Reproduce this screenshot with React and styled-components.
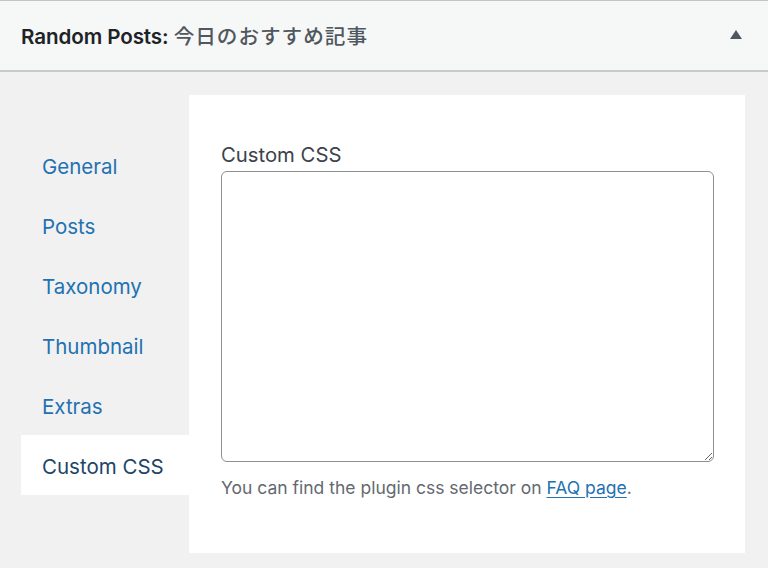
import React from 'react';
import styled, { createGlobalStyle } from 'styled-components';

const GlobalStyle = createGlobalStyle`
  html, body {
    margin: 0;
    padding: 0;
    background: #f1f1f1;
    font-family: Inter, "Noto Sans", "Noto Sans CJK JP", sans-serif;
  }
`;

const Page = styled.div`
  width: 768px;
  height: 568px;
  overflow: hidden;
  background: #f1f1f1;
`;

const Header = styled.div`
  height: 69px;
  box-sizing: content-box;
  border-top: 1px solid #c3c4c7;
  border-bottom: 2px solid #c8c9cc;
  background: #f6f7f7;
  display: flex;
  align-items: center;
  justify-content: space-between;
  padding: 0 26px 0 21px;
`;

const Title = styled.h2`
  margin: 0 0 2px;
  font-size: 20.6px;
  font-weight: 600;
  color: #1d2327;
  letter-spacing: -0.1px;

  span {
    font-family: "Noto Sans CJK JP", sans-serif;
    font-size: 20.6px;
    font-weight: 500;
    color: #50575e;
    letter-spacing: 1px;
  }
`;

const Toggle = styled.div`
  width: 0;
  height: 0;
  border-left: 6px solid transparent;
  border-right: 6px solid transparent;
  border-bottom: 9px solid #50575e;
  margin-top: -2px;
`;

const Body = styled.div`
  display: flex;
  padding: 23px 23px 0 21px;
`;

const Nav = styled.ul`
  list-style: none;
  margin: 0;
  padding: 40px 0 0;
  width: 168px;
  flex-shrink: 0;
`;

const NavItem = styled.li`
  height: 60px;
  display: flex;
  align-items: center;
  padding-left: 21px;
  padding-top: 3px;
  box-sizing: border-box;
  font-size: 20.5px;
  color: ${p => (p.$active ? '#1d4567' : '#2271b1')};
  background: ${p => (p.$active ? '#fff' : 'transparent')};
`;

const Panel = styled.div`
  flex: 1;
  height: 458px;
  background: #fff;
  padding: 48px 31px 0 32px;
  box-sizing: border-box;
`;

const Label = styled.div`
  font-size: 20.3px;
  color: #3c434a;
  line-height: 24px;
  margin-bottom: 4px;
`;

const TextArea = styled.textarea`
  display: block;
  width: 100%;
  height: 291px;
  box-sizing: border-box;
  border: 1.5px solid #8c8f94;
  border-radius: 6px;
  background: #fff;
  resize: vertical;
  margin: 0;
`;

const Help = styled.p`
  margin: 15px 0 0;
  font-size: 17.5px;
  color: #646970;

  a {
    color: #2271b1;
    text-decoration: underline;
    text-underline-offset: 3px;
  }
`;

export default function App() {
  const items = ['General', 'Posts', 'Taxonomy', 'Thumbnail', 'Extras', 'Custom CSS'];
  return (
    <Page>
      <GlobalStyle />
      <Header>
        <Title>
          Random Posts: <span>今日のおすすめ記事</span>
        </Title>
        <Toggle />
      </Header>
      <Body>
        <Nav>
          {items.map((it, i) => (
            <NavItem key={it} $active={i === items.length - 1}>
              {it}
            </NavItem>
          ))}
        </Nav>
        <Panel>
          <Label>Custom CSS</Label>
          <TextArea />
          <Help>
            You can find the plugin css selector on <a href="#faq">FAQ page</a>.
          </Help>
        </Panel>
      </Body>
    </Page>
  );
}
